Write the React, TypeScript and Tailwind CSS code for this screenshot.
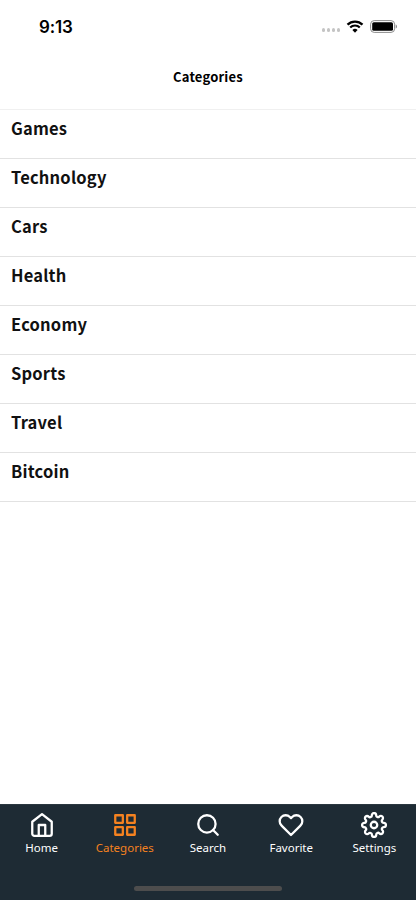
import React from 'react';
import type { IconType } from 'react-icons';
import { FiGrid, FiHeart, FiHome, FiSearch, FiSettings } from 'react-icons/fi';

interface Tab {
  label: string;
  icon: IconType;
}

const CATEGORIES = ['Games', 'Technology', 'Cars', 'Health', 'Economy', 'Sports', 'Travel', 'Bitcoin'];

const TABS: Tab[] = [
  { label: 'Home', icon: FiHome },
  { label: 'Categories', icon: FiGrid },
  { label: 'Search', icon: FiSearch },
  { label: 'Favorite', icon: FiHeart },
  { label: 'Settings', icon: FiSettings },
];

function StatusBar() {
  return (
    <div className="flex h-[47px] shrink-0 items-start justify-between pt-[14px] pr-[18px] pl-[39px]">
      <span className="mt-px font-['Inter',sans-serif] text-[17px] leading-6 font-semibold tracking-[-0.2px]">9:13</span>
      <div className="flex h-6 items-center">
        {/* No carrier signal */}
        <div className="mt-2 mr-[6px] flex gap-[1.5px]">
          {[0, 1, 2, 3].map((dot) => (
            <span key={dot} className="h-[3.5px] w-[3.5px] rounded-full bg-[#c4c4c4]" />
          ))}
        </div>
        <svg className="mr-[6px] h-[13px] w-[18px]" viewBox="0 0 17 13" fill="none" stroke="#000">
          <path d="M1 4.6a10.8 10.8 0 0 1 15 0" strokeWidth="2.3" />
          <path d="M3.7 7.5a6.8 6.8 0 0 1 9.6 0" strokeWidth="2.2" />
          <path d="M8.5 12.7 5.9 10a3.8 3.8 0 0 1 5.2 0z" fill="#000" stroke="none" />
        </svg>
        <svg className="h-[13px] w-[28px]" viewBox="0 0 28 13">
          <rect x="0.6" y="0.6" width="24" height="11.8" rx="3.6" fill="none" stroke="#8c8c8c" />
          <rect x="2.2" y="2.2" width="20.8" height="8.6" rx="1.6" fill="#000" />
          <path d="M25.7 4.5v4c.8-.3 1.3-1.1 1.3-2s-.5-1.7-1.3-2z" fill="#8c8c8c" />
        </svg>
      </div>
    </div>
  );
}

function TabBar() {
  return (
    <nav className="flex h-24 shrink-0 flex-col border-t border-[#2b3840] bg-[#1e2b34]">
      <div className="flex flex-1 pt-[7px]">
        {TABS.map(({ label, icon: Icon }) => (
          <div
            key={label}
            className={`flex flex-1 flex-col items-center ${label === 'Categories' ? 'text-[#f58220]' : 'text-white'}`}
          >
            <Icon size={26} strokeWidth={2.1} />
            <span className="mt-[2px] font-['Noto_Sans',sans-serif] text-[11.5px] leading-4">{label}</span>
          </div>
        ))}
      </div>
      <div className="mx-auto mb-[9px] h-[5px] w-[148px] rounded-full bg-[#4d4d4d]" />
    </nav>
  );
}

export default function App() {
  return (
    <div className="flex h-screen w-full flex-col overflow-hidden bg-white font-['Noto_Sans_CJK_SC',sans-serif] text-black">
      <StatusBar />
      <header className="flex h-[63px] shrink-0 items-center justify-center border-b border-[#f0f0f0] pb-0.5">
        <h1 className="text-[13px] leading-5 font-bold tracking-[0.2px]">Categories</h1>
      </header>
      <main className="flex-1">
        {CATEGORIES.map((category) => (
          <div key={category} className="h-[49px] border-b border-[#e2e2e2] pt-[5px] pl-[11px]">
            <span className="block text-[16.5px] leading-[27px] font-bold tracking-[0.2px] text-[#111]">{category}</span>
          </div>
        ))}
      </main>
      <TabBar />
    </div>
  );
}
